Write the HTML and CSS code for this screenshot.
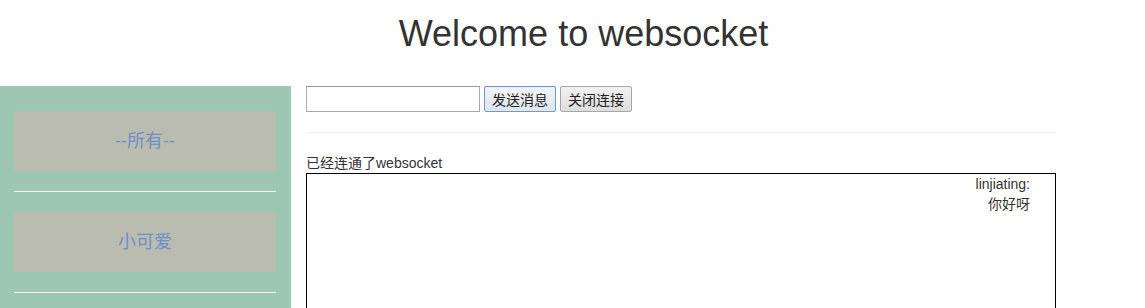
FILE: index.html
```html
<!DOCTYPE html>
<html lang="zh">
<head>
<meta charset="utf-8">
<title>websocket</title>
<link rel="stylesheet" href="styles.css">
</head>
<body>
<header class="header">
  <h1 class="title">Welcome to websocket</h1>
</header>
<div class="main">
  <aside class="sidebar">
    <div class="user">--所有--</div>
    <hr class="user-sep">
    <div class="user">小可爱</div>
    <hr class="user-sep">
  </aside>
  <section class="content">
    <div class="controls">
      <input class="msg-input" type="text">
      <button class="btn btn-focus" type="button">发送消息</button>
      <button class="btn" type="button">关闭连接</button>
    </div>
    <hr class="divider">
    <div class="status">已经连通了websocket</div>
    <div class="messages">
      <div class="msg">linjiating:</div>
      <div class="msg">你好呀</div>
    </div>
  </section>
</div>
</body>
</html>
```
FILE: styles.css
```css
html, body {
  margin: 0;
  padding: 0;
  background: #fff;
  color: #333;
  font-family: "Liberation Sans", Arial, "Noto Sans CJK SC", sans-serif;
  font-size: 14px;
  line-height: 20px;
}

.header {
  height: 86px;
  box-sizing: border-box;
  padding-top: 14px;
  padding-left: 22px;
  text-align: center;
}

.title {
  margin: 0;
  font-size: 36px;
  line-height: 40px;
  font-weight: 400;
  color: #333;
}

.main {
  display: flex;
  align-items: flex-start;
}

.sidebar {
  width: 291px;
  flex: none;
  background: #9ec7b3;
  box-sizing: border-box;
  padding: 25px 15px 20px 14px;
  height: 222px;
}

.user {
  height: 60px;
  line-height: 60px;
  background: #babcb0;
  color: #6f8fc9;
  text-align: center;
  font-size: 18px;
  margin-bottom: 20px;
}

.user-sep {
  margin: 0 0 20px 0;
  border: 0;
  border-top: 1px solid #f4f4f4;
  height: 0;
}

.content {
  margin-left: 15px;
  width: 750px;
}

.controls {
  display: flex;
  gap: 4px;
  height: 26px;
}

.msg-input {
  width: 174px;
  height: 26px;
  box-sizing: border-box;
  border: 1px solid #a9a9a9;
  border-top-color: #999;
  margin: 0;
  padding: 0 3px;
  font: inherit;
}

.btn {
  height: 26px;
  box-sizing: border-box;
  width: 72px;
  padding: 0;
  margin: 0;
  font-family: "Noto Sans CJK SC", "Liberation Sans", sans-serif;
  font-size: 14px;
  color: #222;
  background: linear-gradient(#f2f2f2, #dddddd);
  border: 1px solid #a6a6a6;
  border-radius: 2px;
}

.btn-focus {
  border-color: #6f96d8;
  background: linear-gradient(#f4f6fa, #dde3ec);
  box-shadow: inset 0 0 0 1px #e4ecf8;
}

.divider {
  margin: 20px 0;
  border: 0;
  border-top: 1px solid #eee;
  height: 0;
}

.status {
  height: 20px;
}

.messages {
  border: 1px solid #000;
  height: 300px;
  box-sizing: border-box;
  padding: 0 25px 0 0;
  text-align: right;
}

.msg {
  line-height: 20px;
}
```
